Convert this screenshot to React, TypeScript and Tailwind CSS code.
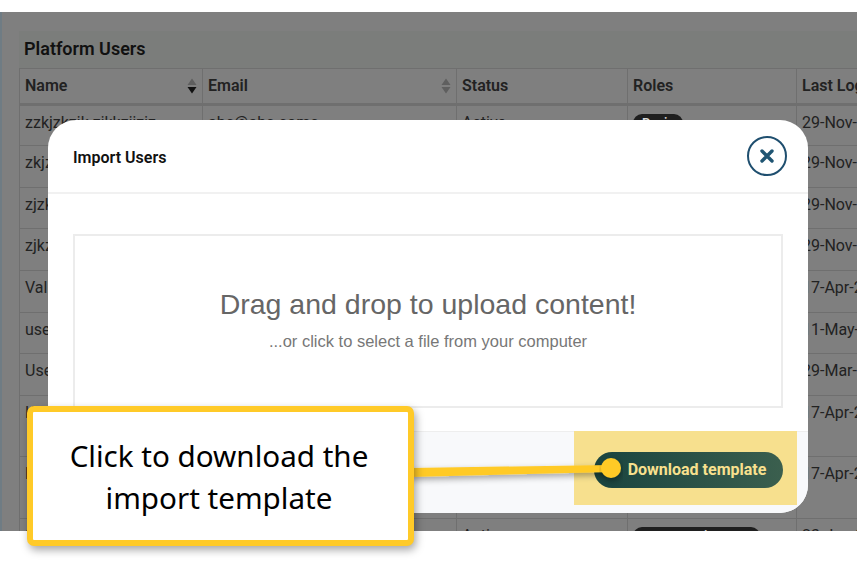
const ROWS = [
  { h: 'h-[41px]', name: 'zzkjzkzjk zjkkzjjzjz', email: 'abc@abc.comc', status: 'Active', role: 'Basic', date: '29-Nov-2023' },
  { h: 'h-[42px]', name: 'zkjzkzjk zjkz', email: 'abc@abc.com', status: 'Active', role: 'Basic', date: '29-Nov-2023' },
  { h: 'h-[41px]', name: 'zjzkzjk zjkz', email: 'abc@abc.com', status: 'Active', role: 'Basic', date: '29-Nov-2023' },
  { h: 'h-[42px]', name: 'zjkzkjz zjkz', email: 'abc@abc.com', status: 'Active', role: 'Basic', date: '29-Nov-2023' },
  { h: 'h-[42px]', name: 'Valid User', email: 'valid@abc.com', status: 'Active', role: 'Basic', date: '17-Apr-2024' },
  { h: 'h-[41px]', name: 'user one', email: 'user@abc.com', status: 'Active', role: 'Basic', date: '11-May-2024' },
  { h: 'h-[42px]', name: 'User two', email: 'user2@abc.com', status: 'Active', role: 'Basic', date: '29-Mar-2024' },
  { h: 'h-[61px]', name: 'Kim Lee', email: 'kim@abc.com', status: 'Active', role: 'Basic', date: '17-Apr-2024' },
  { h: 'h-[62px]', name: 'Lee Kim', email: 'lee@abc.com', status: 'Active', role: 'Basic', date: '17-Apr-2024' },
  { h: 'h-[40px]', name: 'Sam Roy', email: 'sam@abc.com', status: 'Active', role: 'Power Basic Users', date: '23-Jan-2024' },
];

function SortArrows({ dark }: { dark?: boolean }) {
  return (
    <svg width="10" height="16" viewBox="0 0 10 16" className="shrink-0">
      <path d="M5 0.5 L9.5 7 H0.5 Z" fill="#5f5f5f" />
      <path d="M5 15.5 L9.5 9 H0.5 Z" fill={dark ? '#111111' : '#5f5f5f'} />
    </svg>
  );
}

function UsersTable() {
  return (
    <table className="table-fixed border-collapse w-[838px] text-[#222222] font-['Roboto',sans-serif]">
      <colgroup>
        <col className="w-[183px]" />
        <col className="w-[254px]" />
        <col className="w-[171px]" />
        <col className="w-[169px]" />
        <col className="w-[200px]" />
      </colgroup>
      <thead>
        <tr className="h-[36px] text-[16px] font-semibold text-left border-b-[3px] border-[#6f6f6f]">
          <th className="border border-[#6f6f6f] px-[5px] font-semibold">
            <div className="flex items-center justify-between">Name <SortArrows dark /></div>
          </th>
          <th className="border border-[#6f6f6f] px-[5px] font-semibold">
            <div className="flex items-center justify-between">Email <SortArrows /></div>
          </th>
          <th className="border border-[#6f6f6f] px-[5px] font-semibold">Status</th>
          <th className="border border-[#6f6f6f] px-[5px] font-semibold">Roles</th>
          <th className="border border-[#6f6f6f] px-[5px] font-semibold whitespace-nowrap">Last Login</th>
        </tr>
      </thead>
      <tbody className="text-[16px]">
        {ROWS.map(row => (
          <tr key={row.name} className={row.h}>
            <td className="border border-[#6f6f6f] px-[5px] align-top pt-[5px]">{row.name}</td>
            <td className="border border-[#6f6f6f] px-[5px] align-top pt-[5px]">{row.email}</td>
            <td className="border border-[#6f6f6f] px-[5px] align-top pt-[5px]">{row.status}</td>
            <td className="border border-[#6f6f6f] px-[5px] align-top pt-[4px]">
              <span className="inline-block rounded-full bg-[#1f1f1f] text-[#d8d8d8] text-[13px] font-semibold leading-[18px] px-[9px]">{row.role}</span>
            </td>
            <td className="border border-[#6f6f6f] px-[5px] align-top pt-[5px] whitespace-nowrap">{row.date}</td>
          </tr>
        ))}
      </tbody>
    </table>
  );
}

function ImportModal() {
  return (
    <div className="absolute left-[48px] top-[120px] w-[760px] h-[393px] rounded-[28px] bg-white overflow-hidden flex flex-col">
      <div className="h-[74px] shrink-0 flex items-center justify-between pl-[25px] pr-[21px] border-b-2 border-[#f1f1f1]">
        <span className="text-[16px] font-semibold text-[#111111] font-['Roboto',sans-serif] mt-[3px]">Import Users</span>
        <button className="w-[40px] h-[40px] rounded-full border-2 border-[#1f4f6f] flex items-center justify-center">
          <svg width="14" height="14" viewBox="0 0 14 14">
            <path d="M2 2 L12 12 M12 2 L2 12" stroke="#1f5573" strokeWidth="3.4" strokeLinecap="round" />
          </svg>
        </button>
      </div>
      <div className="h-[238px] shrink-0 px-[25px] pt-[40px] border-b border-[#eeeeee]">
        <div className="h-[174px] border-2 border-[#ececec] flex flex-col items-center pt-[51px] font-['Liberation_Sans',sans-serif] text-[#666666]">
          <div className="text-[28.5px] leading-[34px]">Drag and drop to upload content!</div>
          <div className="text-[16.5px] leading-[20px] mt-[10px] text-[#777777]">...or click to select a file from your computer</div>
        </div>
      </div>
      <div className="flex-1 bg-[#f8f9fb] relative">
        <div className="absolute left-[526px] top-[-1px] w-[223px] h-[74px] bg-[#f7e08e] flex items-center justify-end pr-[14px]">
          <button className="w-[189px] h-[36px] mt-[4px] rounded-full bg-gradient-to-r from-[#19443f] to-[#3b5f4e] text-[#f8e08e] text-[16px] font-bold font-['Roboto',sans-serif] pl-[17px]">
            Download template
          </button>
        </div>
      </div>
    </div>
  );
}

function Callout() {
  return (
    <>
      {/* connector from the callout to the button */}
      <svg className="absolute left-0 top-0" width="857" height="561" viewBox="0 0 857 561">
        <defs>
          <filter id="soft" x="-10%" y="-200%" width="120%" height="500%">
            <feDropShadow dx="1" dy="3" stdDeviation="3" floodColor="#000000" floodOpacity="0.35" />
          </filter>
        </defs>
        <path d="M410 468 L611 465 L611 472 L410 477 Z" fill="#ffca28" filter="url(#soft)" />
        <circle cx="611" cy="468" r="10" fill="#ffca28" filter="url(#soft)" />
      </svg>
      <div className="absolute left-[27px] top-[406px] w-[387px] h-[140px] bg-white border-[6px] border-[#ffca28] rounded-[7px] shadow-[2px_4px_8px_rgba(0,0,0,0.35)] flex items-center justify-center text-center text-[29.6px] leading-[42px] text-black font-['Noto_Sans',sans-serif] pt-[2px] pr-[3px]">
        <div>Click to download the<br />import template</div>
      </div>
    </>
  );
}

export default function App() {
  return (
    <div className="relative w-[857px] h-[561px] bg-white overflow-hidden">
      <div className="h-[12px]" />
      <div className="h-[519px] bg-[#7f7f7f] border-l-2 border-[#6f7c84] pl-[17px] pt-[19px] overflow-hidden">
        <div className="h-[37px] w-[838px] bg-[#7b7d7b] pl-[5px] pb-[2px] flex items-center text-[18px] font-semibold text-[#111111] font-['Roboto',sans-serif]">
          Platform Users
        </div>
        <UsersTable />
      </div>
      <ImportModal />
      <Callout />
    </div>
  );
}
